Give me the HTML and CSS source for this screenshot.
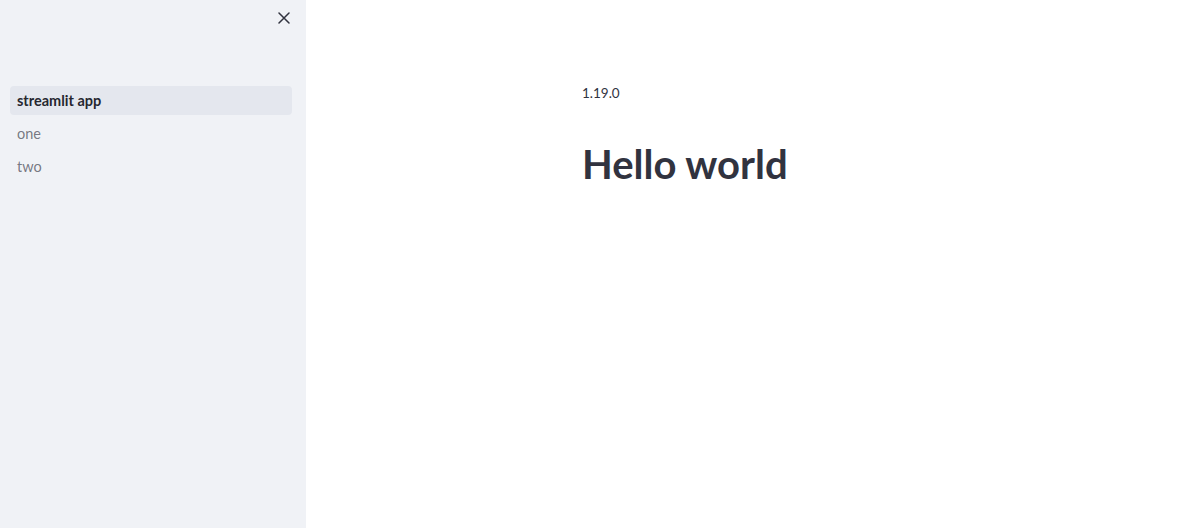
FILE: index.html
```html
<!DOCTYPE html>
<html>
<head>
<meta charset="utf-8">
<link rel="stylesheet" href="styles.css">
</head>
<body>
<div class="app">
  <aside class="sidebar">
    <div class="sidebar-top">
      <button class="close-btn" aria-label="Close sidebar">
        <svg width="12" height="12" viewBox="0 0 12 12"><path d="M1 1 L11 11 M11 1 L1 11" stroke="#31333f" stroke-width="1.5" stroke-linecap="round" fill="none"/></svg>
      </button>
    </div>
    <nav class="nav">
      <a class="nav-item active">streamlit app</a>
      <a class="nav-item">one</a>
      <a class="nav-item">two</a>
    </nav>
  </aside>
  <main class="main">
    <div class="block">
      <p class="version">1.19.0</p>
      <h1 class="title">Hello world</h1>
    </div>
  </main>
</div>
</body>
</html>
```
FILE: styles.css
```css
html, body {
  margin: 0;
  padding: 0;
  height: 100%;
}
body {
  font-family: "Lato", "Open Sans", sans-serif;
  color: #31333f;
  background: #ffffff;
}
.app {
  display: flex;
  height: 528px;
}
.sidebar {
  width: 306px;
  flex-shrink: 0;
  background: #f0f2f6;
  display: flex;
  flex-direction: column;
}
.sidebar-top {
  display: flex;
  justify-content: flex-end;
  padding: 12px 16px 0 0;
  height: 74px;
}
.close-btn {
  width: 12px;
  height: 12px;
  padding: 0;
  border: none;
  background: none;
  display: flex;
  align-items: center;
  justify-content: center;
  cursor: pointer;
}
.nav {
  display: flex;
  flex-direction: column;
  gap: 4px;
  padding: 0 14px 0 10px;
}
.nav-item {
  display: block;
  height: 29px;
  line-height: 29px;
  padding: 0 7px;
  border-radius: 4px;
  font-size: 14.5px;
  color: rgba(49, 51, 63, 0.65);
}
.nav-item.active {
  background: #e4e7ee;
  color: #262730;
  font-weight: 700;
}
.main {
  flex: 1;
  display: flex;
}
.block {
  padding: 83px 0 0 276px;
}
.version {
  margin: 0;
  font-size: 13.5px;
  line-height: 20px;
  color: #31333f;
}
.title {
  margin: 35px 0 0;
  font-size: 40px;
  line-height: 52px;
  font-weight: 700;
  color: #31333f;
}
```
